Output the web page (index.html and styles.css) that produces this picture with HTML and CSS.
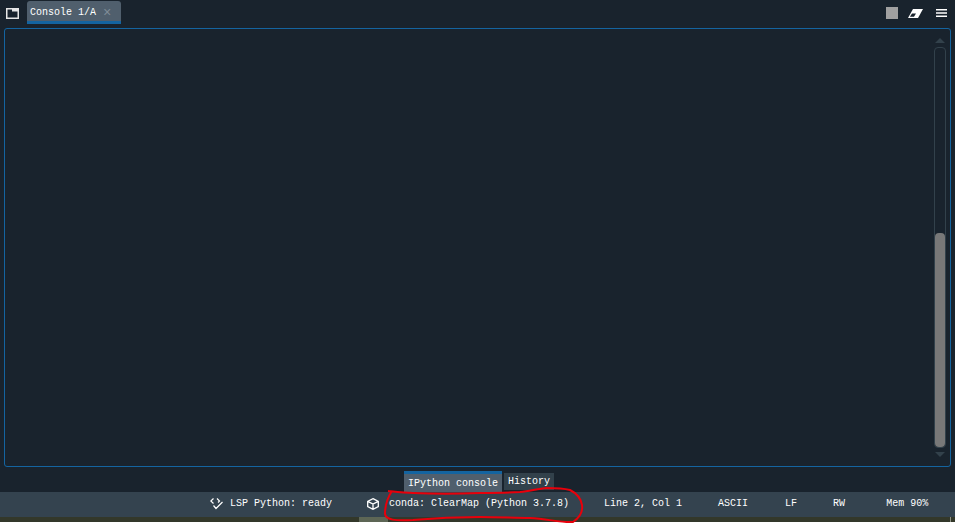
FILE: index.html
```html
<!DOCTYPE html>
<html lang="en">
<head>
<meta charset="utf-8">
<title>Console</title>
<link rel="stylesheet" href="styles.css">
</head>
<body>
<div class="window">
  <header class="topbar">
    <svg class="browse" width="13" height="11" viewBox="0 0 13 11"><rect x="0.750" y="0.750" width="11.500" height="9.500" fill="none" stroke="#e6e6e6" stroke-width="1.500"/><rect x="6" y="1" width="6.500" height="2.500" fill="#e6e6e6"/></svg>
    <div class="tab"><span>Console 1/A</span><span class="tab-x">×</span></div>
    <div class="tools">
      <span class="stop"></span>
      <svg class="eraser" width="15" height="9" viewBox="0 0 15 9"><path d="M5 0H15L10 9H0Z" fill="#fff"/><path d="M4 4.500H8L6 7.800H1.900Z" fill="#19232d"/></svg>
      <svg class="menu" width="11" height="8" viewBox="0 0 11 8"><path d="M0 0.800h11M0 4h11M0 7.200h11" stroke="#fff" stroke-width="1.500"/></svg>
    </div>
  </header>
  <main class="frame">
    <div class="scroll">
      <span class="arrow up"></span>
      <div class="track"><div class="thumb"></div></div>
      <span class="arrow down"></span>
    </div>
  </main>
  <nav class="panes">
    <span class="pane active">IPython console</span>
    <span class="pane">History</span>
  </nav>
  <footer class="status">
    <span class="lsp">
      <svg width="13" height="12" viewBox="0 0 13 12" fill="none" stroke="#fff" stroke-width="1.200"><path d="M3.500 0.500L0.800 3l2.700 2.500M7 0.500L9.500 3 8 4.500M3.500 7.500L6 10.500 12.500 4"/></svg>
      LSP Python: ready
    </span>
    <span class="conda">
      <svg width="12" height="12" viewBox="0 0 12 12" fill="none" stroke="#fff" stroke-width="1.300"><path d="M6 0.700L11.300 3.300v5.400L6 11.300 0.700 8.700V3.300zM0.700 3.300L6 6l5.300-2.700M6 6v5.300"/></svg>
      conda: ClearMap (Python 3.7.8)
    </span>
    <span class="line">Line 2, Col 1</span>
    <span class="enc">ASCII</span>
    <span class="eol">LF</span>
    <span class="rw">RW</span>
    <span class="mem">Mem 90%</span>
  </footer>
  <div class="desktop"><span class="desk-a"></span><span class="desk-b"></span></div>
</div>
<svg class="ink" width="955" height="526" viewBox="0 0 955 526" fill="none"><path d="M392 491 C388 497 385 505 385 514 C386 520 395 521 413 520 C435 518 460 517 480 517 C500 517 515 518 530 518 C548 519 562 523 573 522 C579 518 583 512 582 505 C581 499 578 494 570 490 C562 488 555 488 547 488 C537 489 530 491 520 492 C505 493 495 493 480 493 C455 494 435 494 413 493 C405 493 397 492 388 491" stroke="#e8000b" stroke-width="2"/></svg>
</body>
</html>
```
FILE: styles.css
```css
* { box-sizing: border-box; }
html, body { margin: 0; height: 100%; background: #fff; }
body { font-family: "Liberation Mono", "DejaVu Sans Mono", monospace; font-size: 10px; color: #fff; overflow: hidden; }
.window { width: 955px; height: 522px; background: #19232d; display: flex; flex-direction: column; }
.topbar { height: 28px; display: flex; align-items: flex-start; padding: 1px 8px 0 6px; flex: none; }
.browse { margin-top: 7px; margin-right: 8px; }
.tab { width: 94px; height: 23px; background: #505f6d; border-bottom: 3px solid #1464a0; border-radius: 3px 3px 0 0; padding: 6px 0 0 3px; display: flex; gap: 7px; }
.tab-x { color: #7f8c97; font-size: 14px; line-height: 12px; }
.tools { margin-left: auto; display: flex; align-items: flex-start; }
.stop { width: 12px; height: 12px; margin-top: 6px; background: #a0a0a0; }
.eraser { margin: 8px 0 0 10px; }
.menu { margin: 8px 0 0 13px; }
.frame { margin: 0 4px; height: 439px; border: 1px solid #1464a0; border-radius: 3px; flex: none; display: flex; justify-content: flex-end; padding: 9px 4px; }
.scroll { width: 12px; display: flex; flex-direction: column; align-items: center; gap: 4px; }
.arrow { width: 0; height: 0; border-left: 5px solid transparent; border-right: 5px solid transparent; flex: none; }
.up { border-bottom: 5px solid #32414b; }
.down { border-top: 5px solid #32414b; }
.track { flex: 1; width: 12px; border: 1px solid #32414b; border-radius: 4px; display: flex; flex-direction: column; justify-content: flex-end; }
.thumb { height: 214px; background: #787878; border-radius: 4px; }
.panes { height: 25px; flex: none; display: flex; align-items: flex-end; gap: 2px; padding-left: 404px; }
.pane { background: #32414b; padding: 0 4px; height: 17px; line-height: 18px; margin-bottom: 2px; }
.pane.active { background: #505f6d; border-top: 3px solid #1464a0; height: 21px; margin-bottom: 0; line-height: 19px; }
.status { height: 25px; flex: none; background: #34434f; display: flex; align-items: center; white-space: nowrap; padding-bottom: 2px; }
.status span { display: inline-flex; align-items: center; }
.lsp { margin-left: 210px; gap: 7px; }
.conda { margin-left: 35px; gap: 10px; }
.line { margin-left: 35px; }
.enc { margin-left: 36px; }
.eol { margin-left: 37px; }
.rw { margin-left: 36px; }
.mem { margin-left: 41px; }
.desktop { height: 5px; flex: none; background: #33382a; position: relative; }
.desk-a { position: absolute; left: 359px; top: 0; width: 29px; height: 5px; background: #5d6655; }
.desk-b { position: absolute; left: 950px; top: 0; width: 1px; height: 5px; background: #8d9284; }
.ink { position: absolute; left: 0; top: 0; pointer-events: none; }
```
